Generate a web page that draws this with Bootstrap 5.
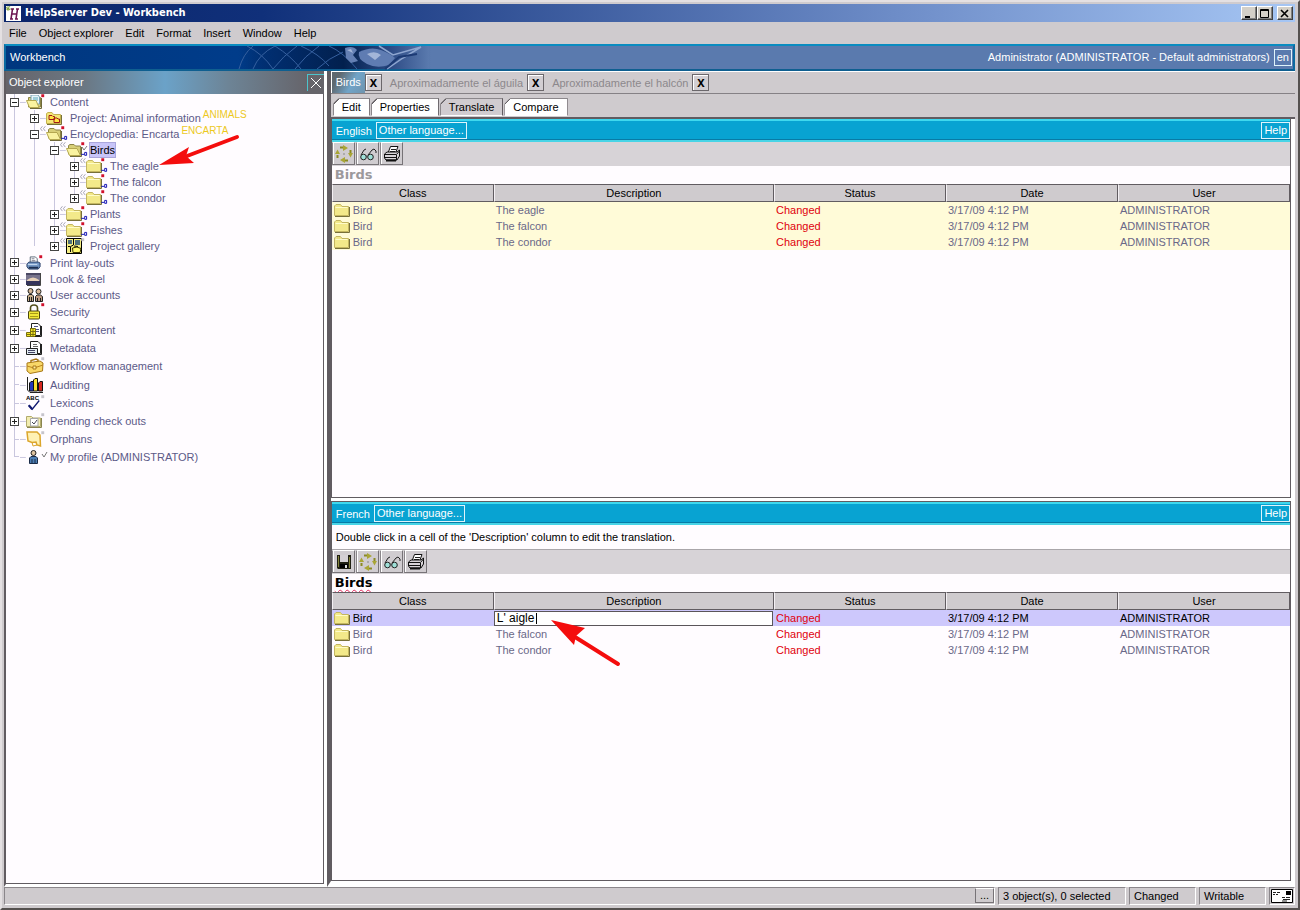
<!DOCTYPE html>
<html lang="en">
<head>
<meta charset="utf-8">
<meta name="viewport" content="width=device-width, initial-scale=1">
<title>HelpServer Dev - Workbench</title>
<link href="https://cdn.jsdelivr.net/npm/bootstrap@5.3.0/dist/css/bootstrap.min.css" rel="stylesheet">
<style>
  :root { --face:#cfcbce; --dark:#615c61; --paper:#fffcff; --ink:#5c5a88; --cyan:#08a3d2; }
  body { font-family:"Liberation Sans",Arial,sans-serif; font-size:11px; line-height:16px; color:#000; background:var(--face); }
  a { color:inherit; text-decoration:none; }
  button, input { font:inherit; color:inherit; border-radius:0; }
  svg { display:block; overflow:visible; flex:none; }
  .app-window { border:2px solid #e4e0e2; border-right-color:#55514f; border-bottom-color:#55514f; padding:2px 3px 2px 2px; overflow:hidden; }

  .title-bar { height:18px; padding:0 2px 0 2px; background:linear-gradient(90deg,#0a246a,#10307a 20%,#7392cc 72%,#a6c6f4); color:#fff; font:bold 11px/18px "DejaVu Sans Condensed","DejaVu Sans",sans-serif; }
  .win-btn { width:16px; height:14px; padding:0; background:#d4d0c8; border:1px solid; border-color:#fff #404040 #404040 #fff; box-shadow:inset -1px -1px #808080; }
  .menu-bar { height:22px; padding:0 5px; gap:12px; }
  .banner { height:27px; border:2px solid #0a6aa0; border-top-color:#0a8cc0; border-bottom-color:#0f5f90; color:#fff; padding:0 1px 1px 4px; background:linear-gradient(90deg,#00377f,#003c8a 18%,#002a68 24%,#0a2d66 28%,#5a7aae 33%); position:relative; }
  .banner-art { position:absolute; left:233px; top:0; }
  .banner .who { position:relative; gap:4px; }
  .box-btn { border:1px solid #dff4fb; background:none; color:#fff; padding:0 2px; line-height:15px; height:17px; }

  .explorer { width:25%; border-left:2px solid var(--dark); border-bottom:3px solid #fff; border-right:3px solid #fff; }
  .explorer-head { height:23px; padding:0 0 1px 3px; color:#fff; background:linear-gradient(90deg,#66646a,#6b7884 25%,#6ba2c8 50%,#6d8496 70%,#66646a 95%); }
  .close-x { width:17px; height:17px; padding:0; background:none; border:1px solid #4cc4cc; border-width:1px 0 0 1px; color:#fff; }
  .tree-area { background:var(--paper); border-right:1px solid var(--dark); border-bottom:1px solid var(--dark); padding-left:4px; color:var(--ink); }
  .tree-list { list-style:none; margin:0; padding:0; background:linear-gradient(#c9c6de,#c9c6de) 4px 0 / 1px calc(100% - 8px) no-repeat; }
  .tree-list .tree-list { margin-left:20px; }
  .node { height:16px; display:flex; align-items:center; white-space:nowrap; position:relative; }
  .node.h17 { height:17px; } .node.h18 { height:18px; } .node.h19 { height:19px; }
  .twisty { width:9px; height:9px; padding:0; border:1px solid #444; background:linear-gradient(#222,#222) 1px 3px/5px 1px no-repeat, #fff; flex:none; }
  .twisty.plus { background:linear-gradient(#222,#222) 1px 3px/5px 1px no-repeat, linear-gradient(#222,#222) 3px 1px/1px 5px no-repeat, #fff; }
  .leaf { width:9px; height:1px; flex:none; background:linear-gradient(#c9c6de,#c9c6de) 4px 0/5px 1px no-repeat; }
  .node svg.ico { width:30px; height:16px; margin-left:1px; }
  .code-tag { color:#ecc91e; font-size:10px; line-height:10px; align-self:flex-start; padding-left:2px; }
  .picked { background:#c8c4f8; color:#000; outline:1px solid #aaa6dc; line-height:14px; }
  .callout { position:absolute; z-index:5; pointer-events:none; }

  .work { border-left:4px solid var(--dark); border-right:4px solid #fff; border-bottom:6px solid #fff; min-width:0; }
  .doc-tabs { height:23px; border-bottom:1px solid #858185; color:#8c888c; border-top:1px solid #fff; margin-right:-4px; background:var(--face); }
  .doc-tab { padding:0 4px; }
  .doc-tab.on { color:#fff; padding:2px 4px 3px 4px; background:linear-gradient(120deg,#5f686f 20%,#70a4c8 60%,#6f94ae); border-left:1px solid #fff; }
  .tab-x { width:17px; height:17px; padding:0; background:#d2ced2; border:1px solid #6b676b; box-shadow:inset 1px 1px #fff; color:#000; font:bold 11px/13px "Noto Sans",sans-serif; }
  .view-tabs { height:25px; gap:1px; padding:4px 2px 0; border-bottom:2px solid var(--dark); margin-right:-4px; background:var(--face); }
  .view-tab { height:18px; padding:0 8px; border:1px solid; border-color:#8b878b var(--dark) #fff #8b878b; background:linear-gradient(135deg,#625e62 4px,#fff 4px); clip-path:polygon(6px 0,100% 0,100% 100%,0 100%,0 6px); }
  .view-tab.on { background:linear-gradient(135deg,#625e62 4px,#d0ccd0 4px); }
  .lang-bar { height:23px; background:var(--cyan); color:#fff; border-top:2px solid #3fd8ee; border-bottom:2px solid #48d4e6; box-shadow:inset 0 -1px #087ba6; padding:0 0 0 4px; gap:4px; flex:none; }
  .pane { flex:1 1 0; min-height:0; background:var(--paper); border-right:1px solid var(--dark); border-bottom:1px solid var(--dark); border-left:1px solid var(--dark); }
  .pane.lower { border-top:1px solid var(--dark); }
  .gap-line { height:3px; background:#fff; }
  .note { height:25px; padding:4px; border-bottom:1px solid #aaa6aa; flex:none; }
  .tool-row { height:24px; background:#d7d3d7; gap:1px; flex:none; }
  .tool-btn { width:23px; height:23px; padding:2px; background:#d0ccd0; border:1px solid #777377; border-top-color:#fff; border-left-color:#8a868a; box-shadow:inset 1px 0 #fff; }
  .pane-title { font:bold 13px/18px "DejaVu Sans",Verdana,sans-serif; margin:0; padding-left:3px; flex:none; height:18px; color:#9c989c; }
  .pane-title span { display:inline-block; }
  .lower .pane-title { color:#000; }
  .lower .pane-title span { text-decoration:underline wavy #e0285a 1px; text-underline-offset:2px; }
  .grid { width:100%; table-layout:fixed; border-collapse:separate; border-spacing:0; color:#6a6888; }
  .grid th { height:18px; line-height:15px; font-weight:400; color:#000; text-align:center; background:var(--face); border:1px solid; border-color:var(--dark) var(--dark) var(--dark) #f4f0f4; padding:0; }
  .grid td { height:16px; padding:0 0 0 2px; line-height:16px; white-space:nowrap; }
  .grid .c1 { width:162px; } .grid .c3, .grid .c4, .grid .c5 { width:172px; }
  .class-cell { gap:3px; }
  .upper .grid tbody { background:#fffbd8; }
  .grid .changed { color:#e0000c; }
  .grid tr.chosen { background:#cdc8fc; color:#000; }
  .grid td.editing { padding:0 1px 0 0; position:relative; }
  .edit-box { display:block; width:100%; height:15px; padding:0 2px; font-size:12px; line-height:13px; border:1px solid #5a565a; background:linear-gradient(#000,#000) 41px 1px/1px 11px no-repeat,#fff; outline:0; }
  .status-bar { height:19px; gap:3px; flex:none; }
  .status-cell { height:18px; border:1px solid; border-color:#8a868a #fff #fff #8a868a; padding:0 4px; }
  .w-count { width:128px; } .w-state { width:67px; }
  .dots-btn { width:19px; height:15px; padding:0; line-height:9px; background:var(--face); border:1px solid #777377; border-top-color:#fff; }
</style>
</head>
<body>
<svg width="0" height="0" class="position-absolute" aria-hidden="true">
  <defs>
    <symbol id="stub" viewBox="0 0 31 16"><path d="M0 8.500H6" stroke="#c9c6de"/></symbol>
    <symbol id="dot" viewBox="0 0 31 16"><rect x="22" width="3" height="3" fill="#d0102c"/></symbol>
    <symbol id="graydot" viewBox="0 0 31 16"><rect x="22" width="3" height="3" fill="#c6c4cc"/></symbol>
    <symbol id="chev" viewBox="0 0 31 16"><path d="M2.500 0L.5 2.500 2.500 5M5.500 0L3.500 2.500 5.500 5" fill="none" stroke="#a3a1b4"/></symbol>
    <symbol id="link" viewBox="0 0 31 16"><path d="M22 12.500H25M25.500 10.500H27.500V13.500H25.500Z" fill="none" stroke="#1414b4"/></symbol>
    <symbol id="folder" viewBox="0 0 16 14"><path d="M.5 12.500V3L2 1.500H6.500L8 3.500H14.500V12.500Z" fill="#f3e98a" stroke="#c4b660"/><path d="M1 13.500H15.500V4" fill="none" stroke="#77703a"/><path d="M1.500 4.500H13.500" stroke="#fffcc8"/></symbol>
    <symbol id="folder-open" viewBox="0 0 16 14"><path d="M2.500 11V2.500L4 1.500H8L9.500 3H14.500V12Z" fill="#d8cf78" stroke="#8c8446"/><path d="M.5 5.500H11L14.500 12.500H3.500Z" fill="#faf3a0" stroke="#b5a850"/><path d="M4 13.500H15.500V4" fill="none" stroke="#6e683a"/></symbol>
    <symbol id="folder-docs" viewBox="0 0 16 14"><path d="M2.500 12V2.500H14.500V12Z" fill="#d8cf78" stroke="#8c8446"/><path d="M5 0H12L13.500 2V9H5Z" fill="#e9f6fb" stroke="#7aa2b4"/><path d="M7 3H12M7 5H12" stroke="#58a8bc"/><path d="M.5 5.500H10L13 12.500H3.500Z" fill="#faf3a0" stroke="#b5a850"/><path d="M4 13.500H15.500V3" fill="none" stroke="#6e683a"/></symbol>
    <symbol id="folder-project" viewBox="0 0 16 14"><path d="M.5 12.500V2.500L2 1.500H6L7.500 3.500H14.500V12.500Z" fill="#f3e678" stroke="#c4b250"/><path d="M1 13.500H15.500V4" fill="none" stroke="#77703a"/><path d="M3 4.500H6L7 5.500H8.500V8.500H3ZM8 7H11L12 8H13.500V11.500H8Z" fill="#ffe640" stroke="#a01818"/></symbol>
    <symbol id="gallery" viewBox="0 0 16 16"><path d="M.5.5H15.500V15.500H.5Z" fill="#f4ec84" stroke="#000"/><path d="M2 2H6V6H2Z" fill="#50707c"/><path d="M9 2H14V7H9Z" fill="#50707c"/><path d="M7.500 1V7L4.500 8.500V14M2 8.500H4M8 8L12 8.500" fill="none" stroke="#000"/><path d="M6.500 10L11 9 15 10.500 14 14.500H7Z" fill="#fff86a" stroke="#3a3400"/></symbol>
    <symbol id="printer" viewBox="0 0 16 14"><path d="M4.500 6V.5H10L12 2.500V6" fill="#fff" stroke="#5a6678"/><path d="M6 2.500H9M6 4.500H10" stroke="#778"/><path d="M1 8L3 6H13L15 7V11L13 13.500H3L1 11Z" fill="#7496c4" stroke="#263c64"/><path d="M2 8.500H12" stroke="#cfe0f4"/><path d="M3 11H13V13H3Z" fill="#1c2e50"/></symbol>
    <symbol id="picture" viewBox="0 0 16 14"><path d="M0 1H14V13H0Z" fill="#77728c"/><path d="M0 1H14V3H0Z" fill="#4c4864"/><path d="M1 8Q7 3 13 8V9H1Z" fill="#e8d0b8"/><path d="M0 9H14V13H0Z" fill="#34325a"/><path d="M14.500 1V13.500H1" stroke="#444" fill="none"/></symbol>
    <symbol id="users" viewBox="0 0 18 16"><g stroke="#222"><circle cx="4.500" cy="4" r="2.500" fill="#d8b898"/><path d="M1.500 14.500V9L3 7.500H6L7.500 9V14.500ZM3.500 10V14M5.500 10V14" fill="#c9ae8c"/><circle cx="12.500" cy="4.500" r="2.500" fill="#d8b898"/><path d="M9.500 14.500V9.500L11 8H14.500L16.500 9.500V14.500ZM11.500 11V14M14.500 11V14" fill="#bd9a80"/></g></symbol>
    <symbol id="lock" viewBox="0 0 16 16"><path d="M4.500 7V4Q4.500 1 8 1T11.500 4V7" fill="none" stroke="#55501c" stroke-width="1.600"/><rect x="2.500" y="7" width="11" height="8" rx="1" fill="#f0e838" stroke="#4a4510"/><path d="M4 9.500H12M4 12.500H12" stroke="#a89a18"/></symbol>
    <symbol id="smart" viewBox="0 0 16 16"><path d="M5.500 13.500V1.500H12L14.500 4V13.500Z" fill="#fff" stroke="#222"/><path d="M8 4.500H12M8 7.500H13M8 9.500H13" stroke="#555588"/><path d="M.5 10.500H4.500V6.500H9.500V14.500H.5ZM4.500 6V14M.5 12.500H9M4.500 9.500H9M7 7V14" fill="#f4e628" stroke="#7a7010"/><path d="M9 14.500H15.500V4" fill="none" stroke="#222"/></symbol>
    <symbol id="meta" viewBox="0 0 16 16"><path d="M4.500 12V1.500H12L14.500 4V13.500H4.500" fill="#fff" stroke="#222"/><path d="M7 4.500H11M7 6.500H12" stroke="#666"/><path d="M.5 8.500H11.500V14.500H.5Z" fill="#e4ecf4" stroke="#222"/><path d="M2 10.500H9M2 12.500H9" stroke="#446"/><path d="M15.500 4V14.500H12" fill="none" stroke="#222"/></symbol>
    <symbol id="briefcase" viewBox="0 0 18 16"><path d="M5 5V2.500L10 1L12 2V4" fill="none" stroke="#a87818" stroke-width="1.500"/><path d="M1 5L14 3 17 5 16.500 13 4 15.500 1 13Z" fill="#f8d868" stroke="#a87818"/><path d="M1 8L8 10 17 7" fill="none" stroke="#bb8420"/><path d="M7 8H10V11H7Z" fill="#fff0a0" stroke="#a87818"/></symbol>
    <symbol id="chart" viewBox="0 0 16 16"><path d="M.5 0V13L3 15.500H16" fill="none" stroke="#222"/><path d="M2.500 6L4 4.500H6.500V14H2.500Z" fill="#2438b8" stroke="#111"/><path d="M6.500 3L8 1.500H10.500V14H6.500Z" fill="#f8e030" stroke="#111"/><path d="M11.500 6L13 4.500H15.500V14H11.500Z" fill="#d82820" stroke="#111"/></symbol>
    <symbol id="tick" viewBox="0 0 16 16"><path d="M2 9.500L6 14 14 4" fill="none" stroke="#101870" stroke-width="1.500"/><path d="M2 9.500L6 14" stroke="#101870" stroke-width="2.500"/></symbol>
    <symbol id="pending" viewBox="0 0 16 14"><path d="M.5 12.500V2.500H5.500L7 4H14.500V12.500Z" fill="#f2ecb0" stroke="#b2ab6c"/><path d="M4.500 4.500H12V12H4.500Z" fill="#fff" stroke="#a8a8a8"/><path d="M6 8L8 10 11 6" fill="none" stroke="#445"/><path d="M1 13.500H15.500V4" fill="none" stroke="#8a8450"/></symbol>
    <symbol id="orphan" viewBox="0 0 16 16"><path d="M1 1L11 1 14 4 14.500 15 11 14 10 11 6 11.500 2 10Z" fill="#fff1b4" stroke="#dba52c" stroke-width="1.500"/><path d="M6 11L7 15 11 14" fill="none" stroke="#dba52c"/></symbol>
    <symbol id="person" viewBox="0 0 16 16"><circle cx="7.500" cy="4" r="2.500" fill="#e0c4a0" stroke="#222"/><path d="M3.500 14.500V9L5 7.500H10L11.500 9V14.500ZM6 10V14M9 10V14" fill="#4c7eb4" stroke="#1b2c48"/></symbol>
    <symbol id="recycle" viewBox="0 0 18 18"><g fill="none" stroke="#8b8a22" stroke-width="2"><path d="M5 2.500H8"/><path d="M15.500 5V8"/><path d="M10 15.500H13"/><path d="M2.500 10V13"/></g><path d="M8 0L13 3 8 6ZM13 8L18 8 15.500 12.500ZM10 12L5 15 10 18ZM0 9L5 9 2.500 4.500Z" fill="#a9a636"/><path d="M9 8V10" stroke="#888"/></symbol>
    <symbol id="glasses" viewBox="0 0 18 18"><g stroke="#222" fill="#9fe0d8"><circle cx="4.500" cy="12" r="2.800"/><circle cx="11.500" cy="12" r="2.800"/></g><path d="M2 10L5 5 7 4M9 10L13 5 15 4 17 6V8M7.500 11H8.500" fill="none" stroke="#222"/></symbol>
    <symbol id="print" viewBox="0 0 18 18"><path d="M5 8L7.500 1.500H15L12.500 8" fill="#fff" stroke="#111"/><path d="M8 4.500H13M7 6.500H12" stroke="#222"/><path d="M1.500 9L4 7H14L16.500 5V11L14 15H3L1.500 13Z" fill="#d8d4d8" stroke="#111"/><path d="M1.500 9.500H13.500L16.500 6M13.500 10V15M2 12.500H13" fill="none" stroke="#111"/><path d="M3 15.500H13" stroke="#111" stroke-width="2"/></symbol>
    <symbol id="floppy" viewBox="0 0 18 18"><path d="M2 2H16V16H3L2 15Z" fill="#202012"/><path d="M3 3H4V14H3Z" fill="#83833c"/><path d="M5 2H13V9H5Z" fill="#d4d0d4"/><path d="M5 11H13V15H5Z" fill="#000"/><path d="M10 12H12V15H10Z" fill="#ddd"/><path d="M14 4H15V15H14Z" fill="#83833c"/></symbol>
  </defs>
</svg>

<div class="app-window vh-100 d-flex flex-column">
  <header class="title-bar d-flex align-items-center flex-shrink-0">
    <svg width="15" height="15" viewBox="0 0 15 15" class="me-1" role="img" aria-label="HelpServer"><path d="M0 0H15V15H0Z" fill="#fff"/><path d="M5 3H8M4 13H7M10 3H13M9 13H12M6.500 3L5 13M11.500 3L10 13M6 8H11" stroke="#6c1450" stroke-width="1.600"/><path d="M0 1L4 4M4 0L1 4M0 3H5M2 0V5" stroke="#7a9a30" stroke-width=".8"/></svg>
    <span class="flex-grow-1">HelpServer Dev - Workbench</span>
    <button class="win-btn" aria-label="Minimize"><svg width="12" height="11"><path d="M3 9H8" stroke="#000" stroke-width="2"/></svg></button>
    <button class="win-btn me-1" aria-label="Maximize"><svg width="12" height="11"><path d="M2.500 1.500H10.500V9.500H2.500ZM2 2.500H11" fill="none" stroke="#000"/></svg></button>
    <button class="win-btn" aria-label="Close"><svg width="12" height="11"><path d="M3 2L10 9M10 2L3 9" stroke="#000" stroke-width="1.600"/></svg></button>
  </header>
  <nav class="menu-bar d-flex align-items-center flex-shrink-0">
    <a href="#">File</a><a href="#">Object explorer</a><a href="#">Edit</a><a href="#">Format</a><a href="#">Insert</a><a href="#">Window</a><a href="#">Help</a>
  </nav>
  <div class="banner d-flex align-items-center justify-content-between flex-shrink-0">
    <svg class="banner-art" width="190" height="23" viewBox="0 0 190 23" aria-hidden="true">
      <defs><linearGradient id="globe"><stop offset="0" stop-color="#012c6c" stop-opacity="0"/><stop offset=".2" stop-color="#012c6c"/><stop offset=".55" stop-color="#02204e"/><stop offset=".8" stop-color="#2e4c86"/><stop offset="1" stop-color="#5a7aae"/></linearGradient></defs>
      <path d="M0 0H190V23H0Z" fill="url(#globe)"/>
      <path d="M0 23Q4 8 14 0M14 23Q20 8 36 0M34 23Q44 10 58 0M56 23Q66 10 80 0M78 23Q90 12 104 6M8 0Q24 8 34 23M36 0Q52 10 62 23M62 0Q80 8 90 20M90 0Q104 6 118 23" fill="none" stroke="#36609f"/>
      <path d="M106 2Q114 -1 118 4L114 9 119 15 112 17 107 12Z" fill="#6480b4"/>
      <path d="M120 6Q132 0 142 4T156 12L150 19Q138 23 128 18T120 6Z" fill="#5f7cb2"/>
      <path d="M128 8Q136 4 142 9L136 14ZM108 4L112 3 114 7Z" fill="#a4b6d8"/>
      <path d="M140 0L154 9 182 1 164 12 148 23" fill="none" stroke="#8ea6d0" stroke-width="1.500"/><path d="M146 23L160 11 178 8" fill="none" stroke="#1c3a74" stroke-width="2"/>
    </svg>
    <span class="who">Workbench</span>
    <div class="who d-flex align-items-center"><span>Administrator (ADMINISTRATOR - Default administrators)</span><button class="box-btn">en</button></div>
  </div>

  <main class="d-flex flex-grow-1" style="min-height:0">
    <aside class="explorer d-flex flex-column flex-shrink-0">
      <div class="explorer-head d-flex align-items-center justify-content-between flex-shrink-0"><span>Object explorer</span>
        <button class="close-x" aria-label="Close explorer"><svg width="15" height="15"><path d="M3 3L13 13M13 3L3 13" stroke="#fff"/></svg></button></div>
      <div class="tree-area flex-grow-1">
        <ul class="tree-list">
          <li><div class="node"><button class="twisty" aria-label="Collapse"></button><svg class="ico"><use href="#stub"/><use href="#folder-docs" x="6" y="1" width="16" height="14"/><use href="#dot"/></svg><a href="#">Content</a></div>
            <ul class="tree-list">
              <li><div class="node"><button class="twisty plus" aria-label="Expand"></button><svg class="ico"><use href="#stub"/><use href="#folder-project" x="6" y="1" width="16" height="14"/></svg><a href="#">Project: Animal information</a><span class="code-tag">ANIMALS</span></div></li>
              <li><div class="node"><button class="twisty" aria-label="Collapse"></button><svg class="ico"><use href="#stub"/><use href="#chev"/><use href="#folder-open" x="6" y="1" width="16" height="14"/><use href="#dot"/><use href="#link"/></svg><a href="#">Encyclopedia: Encarta</a><span class="code-tag">ENCARTA</span></div>
                <ul class="tree-list">
                  <li><div class="node"><button class="twisty" aria-label="Collapse"></button><svg class="ico"><use href="#stub"/><use href="#chev"/><use href="#folder-open" x="6" y="1" width="16" height="14"/><use href="#dot"/><use href="#link"/><path d="M22 5L24 8 27 4" fill="none" stroke="#777"/></svg><a href="#" class="picked">Birds</a></div>
                    <ul class="tree-list">
                      <li><div class="node"><button class="twisty plus" aria-label="Expand"></button><svg class="ico"><use href="#stub"/><use href="#chev"/><use href="#folder" x="6" y="1" width="16" height="14"/><use href="#dot"/><use href="#link"/></svg><a href="#" class="position-relative">The eagle<svg class="callout start-100 bottom-0" width="82" height="40" viewBox="0 0 82 40" aria-hidden="true"><path d="M28 22L78 3" stroke="#f40d0d" stroke-width="4" stroke-linecap="round"/><path d="M0 31L30 13 27 22 35 29Z" fill="#f40d0d"/></svg></a></div></li>
                      <li><div class="node"><button class="twisty plus" aria-label="Expand"></button><svg class="ico"><use href="#stub"/><use href="#chev"/><use href="#folder" x="6" y="1" width="16" height="14"/><use href="#dot"/><use href="#link"/></svg><a href="#">The falcon</a></div></li>
                      <li><div class="node"><button class="twisty plus" aria-label="Expand"></button><svg class="ico"><use href="#stub"/><use href="#chev"/><use href="#folder" x="6" y="1" width="16" height="14"/><use href="#dot"/><use href="#link"/></svg><a href="#">The condor</a></div></li>
                    </ul></li>
                  <li><div class="node"><button class="twisty plus" aria-label="Expand"></button><svg class="ico"><use href="#stub"/><use href="#chev"/><use href="#folder" x="6" y="1" width="16" height="14"/><use href="#dot"/><use href="#link"/></svg><a href="#">Plants</a></div></li>
                  <li><div class="node"><button class="twisty plus" aria-label="Expand"></button><svg class="ico"><use href="#stub"/><use href="#chev"/><use href="#folder" x="6" y="1" width="16" height="14"/><use href="#dot"/><use href="#link"/></svg><a href="#">Fishes</a></div></li>
                  <li><div class="node"><button class="twisty plus" aria-label="Expand"></button><svg class="ico"><use href="#stub"/><use href="#chev"/><use href="#gallery" x="6" y="0" width="16" height="16"/><use href="#graydot"/></svg><a href="#">Project gallery</a></div></li>
                </ul></li>
            </ul></li>
          <li class="node h17"><button class="twisty plus" aria-label="Expand"></button><svg class="ico"><use href="#stub"/><use href="#printer" x="6" y="1" width="15" height="14"/><use href="#dot" x="-2"/></svg><a href="#">Print lay-outs</a></li>
          <li class="node"><button class="twisty plus" aria-label="Expand"></button><svg class="ico"><use href="#stub"/><use href="#picture" x="6" y="1" width="16" height="14"/></svg><a href="#">Look &amp; feel</a></li>
          <li class="node"><button class="twisty plus" aria-label="Expand"></button><svg class="ico"><use href="#stub"/><use href="#users" x="6" y="0" width="18" height="16"/></svg><a href="#">User accounts</a></li>
          <li class="node h18"><button class="twisty plus" aria-label="Expand"></button><svg class="ico"><use href="#stub"/><use href="#lock" x="6" y="0" width="16" height="16"/><use href="#dot" y="-1"/></svg><a href="#">Security</a></li>
          <li class="node h18"><button class="twisty plus" aria-label="Expand"></button><svg class="ico"><use href="#stub"/><use href="#smart" x="6" y="0" width="16" height="16"/></svg><a href="#">Smartcontent</a></li>
          <li class="node h18"><button class="twisty plus" aria-label="Expand"></button><svg class="ico"><use href="#stub"/><use href="#meta" x="6" y="0" width="16" height="16"/></svg><a href="#">Metadata</a></li>
          <li class="node h18"><span class="leaf"></span><svg class="ico"><use href="#stub"/><use href="#briefcase" x="6" y="0" width="18" height="16"/><use href="#graydot" y="-1"/></svg><a href="#">Workflow management</a></li>
          <li class="node h19"><span class="leaf"></span><svg class="ico"><use href="#stub"/><use href="#chart" x="7" y="0" width="16" height="16"/></svg><a href="#">Auditing</a></li>
          <li class="node h18"><span class="leaf"></span><svg class="ico"><use href="#stub"/><use href="#tick" x="6" y="2" width="16" height="14"/><use href="#graydot"/><text x="6" y="5" font-size="6" font-weight="bold" fill="#000">ABC</text></svg><a href="#">Lexicons</a></li>
          <li class="node h18"><button class="twisty plus" aria-label="Expand"></button><svg class="ico"><use href="#stub"/><use href="#pending" x="6" y="1" width="16" height="14"/><use href="#graydot"/></svg><a href="#">Pending check outs</a></li>
          <li class="node h18"><span class="leaf"></span><svg class="ico"><use href="#stub"/><use href="#orphan" x="6" y="0" width="16" height="16"/><use href="#graydot"/></svg><a href="#">Orphans</a></li>
          <li class="node h17"><span class="leaf"></span><svg class="ico"><use href="#stub"/><use href="#person" x="6" y="0" width="16" height="16"/><path d="M22 5L24 8 27 3" fill="none" stroke="#777"/></svg><a href="#">My profile (ADMINISTRATOR)</a></li>
        </ul>
      </div>
    </aside>

    <section class="work flex-grow-1 d-flex flex-column">
      <div class="doc-tabs d-flex align-items-center flex-shrink-0">
        <a href="#" class="doc-tab on">Birds</a><button class="tab-x" aria-label="Close Birds">X</button>
        <a href="#" class="doc-tab ms-1">Aproximadamente el águila</a><button class="tab-x" aria-label="Close águila">X</button>
        <a href="#" class="doc-tab ms-1">Aproximadamente el halcón</a><button class="tab-x" aria-label="Close halcón">X</button>
      </div>
      <div class="view-tabs d-flex flex-shrink-0">
        <button class="view-tab">Edit</button><button class="view-tab">Properties</button><button class="view-tab on">Translate</button><button class="view-tab">Compare</button>
      </div>

      <div class="pane upper d-flex flex-column">
        <div class="lang-bar d-flex align-items-center"><span>English</span><button class="box-btn">Other language...</button><button class="box-btn ms-auto">Help</button></div>
        <div class="tool-row d-flex">
          <button class="tool-btn" aria-label="Refresh"><svg width="18" height="18"><use href="#recycle"/></svg></button>
          <button class="tool-btn" aria-label="Preview"><svg width="18" height="18"><use href="#glasses"/></svg></button>
          <button class="tool-btn" aria-label="Print"><svg width="18" height="18"><use href="#print"/></svg></button>
        </div>
        <h2 class="pane-title"><span>Birds</span></h2>
        <table class="grid">
          <thead><tr><th class="c1">Class</th><th class="c2">Description</th><th class="c3">Status</th><th class="c4">Date</th><th class="c5">User</th></tr></thead>
          <tbody>
            <tr><td><div class="class-cell d-flex align-items-center"><svg width="16" height="14"><use href="#folder"/></svg>Bird</div></td><td>The eagle</td><td class="changed">Changed</td><td>3/17/09 4:12 PM</td><td>ADMINISTRATOR</td></tr>
            <tr><td><div class="class-cell d-flex align-items-center"><svg width="16" height="14"><use href="#folder"/></svg>Bird</div></td><td>The falcon</td><td class="changed">Changed</td><td>3/17/09 4:12 PM</td><td>ADMINISTRATOR</td></tr>
            <tr><td><div class="class-cell d-flex align-items-center"><svg width="16" height="14"><use href="#folder"/></svg>Bird</div></td><td>The condor</td><td class="changed">Changed</td><td>3/17/09 4:12 PM</td><td>ADMINISTRATOR</td></tr>
          </tbody>
        </table>
      </div>
      <div class="gap-line"></div>
      <div class="pane lower d-flex flex-column">
        <div class="lang-bar d-flex align-items-center"><span>French</span><button class="box-btn">Other language...</button><button class="box-btn ms-auto">Help</button></div>
        <div class="note">Double click in a cell of the 'Description' column to edit the translation.</div>
        <div class="tool-row d-flex">
          <button class="tool-btn" aria-label="Save"><svg width="18" height="18"><use href="#floppy"/></svg></button>
          <button class="tool-btn" aria-label="Refresh"><svg width="18" height="18"><use href="#recycle"/></svg></button>
          <button class="tool-btn" aria-label="Preview"><svg width="18" height="18"><use href="#glasses"/></svg></button>
          <button class="tool-btn" aria-label="Print"><svg width="18" height="18"><use href="#print"/></svg></button>
        </div>
        <h2 class="pane-title"><span>Birds</span></h2>
        <table class="grid">
          <thead><tr><th class="c1">Class</th><th class="c2">Description</th><th class="c3">Status</th><th class="c4">Date</th><th class="c5">User</th></tr></thead>
          <tbody>
            <tr class="chosen"><td><div class="class-cell d-flex align-items-center"><svg width="16" height="14"><use href="#folder"/></svg>Bird</div></td><td class="editing"><input class="edit-box" type="text" aria-label="Description" value="L' aigle"><svg class="callout" style="left:57px;top:9px" width="70" height="48" viewBox="0 0 70 48" aria-hidden="true"><path d="M24 18L67 45" stroke="#f40d0d" stroke-width="4" stroke-linecap="round"/><path d="M0 1L34 9 25 17 23 26Z" fill="#f40d0d"/></svg></td><td class="changed">Changed</td><td>3/17/09 4:12 PM</td><td>ADMINISTRATOR</td></tr>
            <tr><td><div class="class-cell d-flex align-items-center"><svg width="16" height="14"><use href="#folder"/></svg>Bird</div></td><td>The falcon</td><td class="changed">Changed</td><td>3/17/09 4:12 PM</td><td>ADMINISTRATOR</td></tr>
            <tr><td><div class="class-cell d-flex align-items-center"><svg width="16" height="14"><use href="#folder"/></svg>Bird</div></td><td>The condor</td><td class="changed">Changed</td><td>3/17/09 4:12 PM</td><td>ADMINISTRATOR</td></tr>
          </tbody>
        </table>
      </div>
    </section>
  </main>

  <footer class="status-bar d-flex">
    <div class="status-cell flex-grow-1 d-flex justify-content-end p-0"><button class="dots-btn" aria-label="More">...</button></div>
    <div class="status-cell w-count">3 object(s), 0 selected</div>
    <div class="status-cell w-state">Changed</div>
    <div class="status-cell w-state">Writable</div>
    <div class="status-cell d-flex align-items-center px-0"><svg width="24" height="14" viewBox="0 0 24 14"><path d="M1.500.5H22.500V13.500H1.500Z" fill="#fff" stroke="#000"/><path d="M3 3.500H6M7 3.500H10M3 5.500H5M6 5.500H8M12 8.500H15M16 8.500H20M13 10.500H20M12 12H17" stroke="#222"/><path d="M16 2H21V6H16Z" fill="#000"/></svg></div>
  </footer>
</div>
<script src="https://cdn.jsdelivr.net/npm/bootstrap@5.3.0/dist/js/bootstrap.bundle.min.js"></script>
</body>
</html>
